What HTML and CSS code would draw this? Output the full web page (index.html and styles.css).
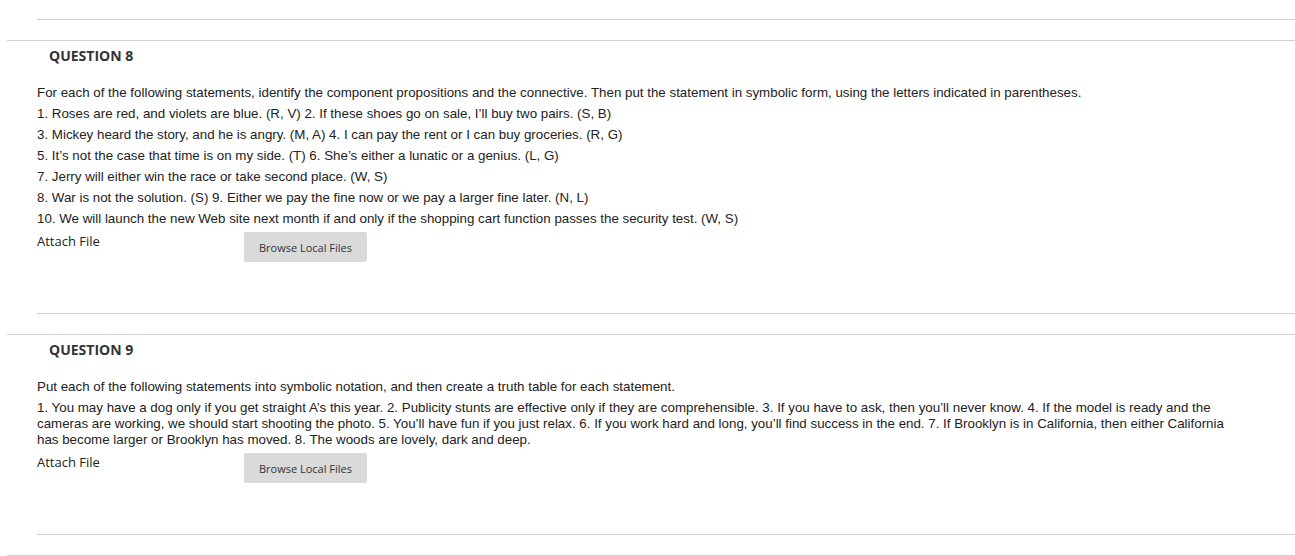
FILE: index.html
```html
<!DOCTYPE html>
<html lang="en">
<head>
<meta charset="utf-8">
<title>Questions</title>
<link rel="stylesheet" href="styles.css">
</head>
<body>
<div class="page">
  <div class="inner-line first"></div>

  <section class="question">
    <h3 class="q-title">QUESTION 8</h3>
    <div class="q-body">
      <p>For each of the following statements, identify the component propositions and the connective. Then put the statement in symbolic form, using the letters indicated in parentheses.</p>
      <p>1. Roses are red, and violets are blue. (R, V) 2. If these shoes go on sale, I’ll buy two pairs. (S, B)</p>
      <p>3. Mickey heard the story, and he is angry. (M, A) 4. I can pay the rent or I can buy groceries. (R, G)</p>
      <p>5. It’s not the case that time is on my side. (T) 6. She’s either a lunatic or a genius. (L, G)</p>
      <p>7. Jerry will either win the race or take second place. (W, S)</p>
      <p>8. War is not the solution. (S) 9. Either we pay the fine now or we pay a larger fine later. (N, L)</p>
      <p>10. We will launch the new Web site next month if and only if the shopping cart function passes the security test. (W, S)</p>
      <div class="attach">
        <span class="attach-label">Attach File</span>
        <button class="browse" type="button">Browse Local Files</button>
      </div>
    </div>
    <div class="inner-line"></div>
  </section>

  <section class="question">
    <h3 class="q-title">QUESTION 9</h3>
    <div class="q-body">
      <p>Put each of the following statements into symbolic notation, and then create a truth table for each statement.</p>
      <p>1. You may have a dog only if you get straight A’s this year. 2. Publicity stunts are effective only if they are comprehensible. 3. If you have to ask, then you’ll never know. 4. If the model is ready and the cameras are working, we should start shooting the photo. 5. You’ll have fun if you just relax. 6. If you work hard and long, you’ll find success in the end. 7. If Brooklyn is in California, then either California has become larger or Brooklyn has moved. 8. The woods are lovely, dark and deep.</p>
      <div class="attach">
        <span class="attach-label">Attach File</span>
        <button class="browse" type="button">Browse Local Files</button>
      </div>
    </div>
    <div class="inner-line"></div>
  </section>
  <div class="section-line"></div>
</div>
</body>
</html>
```

FILE: styles.css
```css
html, body {
  margin: 0;
  padding: 0;
  background: #ffffff;
}

.page {
  padding-left: 7px;
}

.inner-line {
  height: 1px;
  background: #cfcfcf;
  margin-left: 30px;
  margin-top: 51px;
}

.inner-line.first {
  margin-top: 19px;
  margin-bottom: 20px;
}

.question {
  border-top: 1px solid #cfcfcf;
  margin-top: 0;
}

.question + .question {
  margin-top: 20px;
}

.section-line {
  height: 1px;
  background: #cfcfcf;
  margin-top: 20px;
}

.q-title {
  margin: 5px 0 0 42px;
  font-family: "Open Sans", sans-serif;
  font-weight: 700;
  font-size: 14px;
  line-height: 20px;
  color: #333333;
}

.q-body {
  padding: 19px 55px 0 30px;
  font-family: "Liberation Sans", Arial, sans-serif;
  font-size: 13.33px;
  color: #222222;
}

.q-body p {
  margin: 0 0 5px 0;
  line-height: 16px;
}

.attach {
  display: flex;
  align-items: flex-start;
  margin-top: 1px;
}

.attach-label {
  width: 207px;
  font-family: "Open Sans", sans-serif;
  font-size: 13px;
  line-height: 18px;
  color: #222222;
}

.browse {
  width: 123px;
  height: 30px;
  border: none;
  border-radius: 2px;
  background: #dadada;
  font-family: "Open Sans", sans-serif;
  font-size: 11px;
  color: #333333;
  padding: 0;
  cursor: pointer;
}
```
